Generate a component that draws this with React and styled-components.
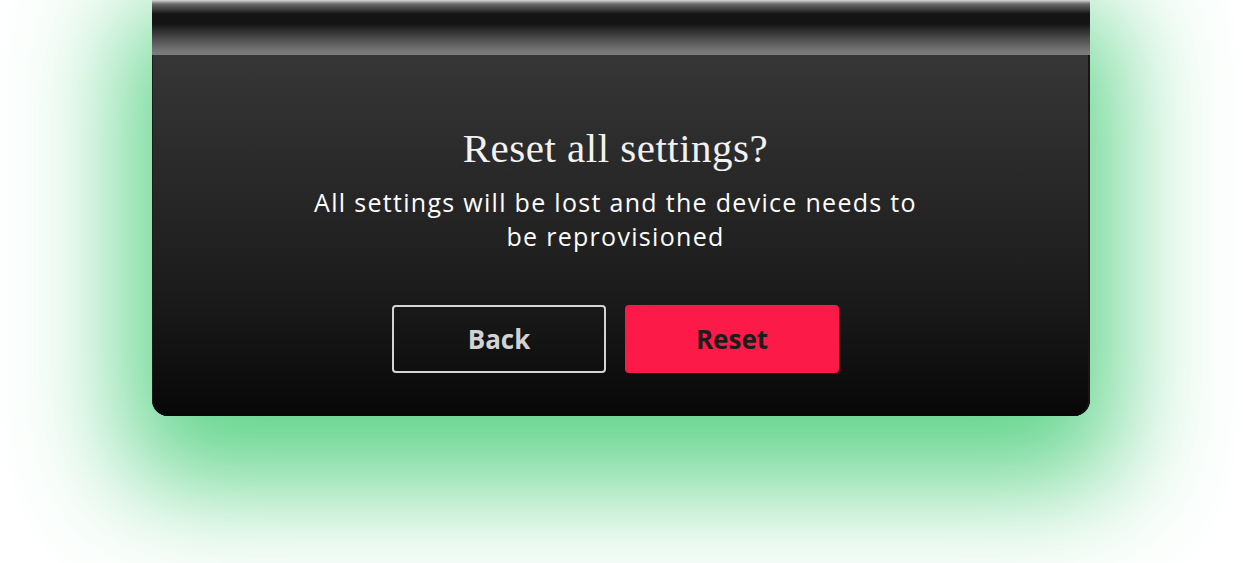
import React from "react";
import styled, { createGlobalStyle } from "styled-components";

const Global = createGlobalStyle`
  html, body { margin: 0; padding: 0; background: #ffffff; overflow: hidden; }
  * { box-sizing: border-box; }
`;

const Page = styled.div`
  width: 1243px;
  height: 563px;
  display: flex;
  justify-content: center;
  overflow: hidden;
`;

const Device = styled.div`
  width: 938px;
  height: 416px;
  margin-left: -1px;
  display: flex;
  flex-direction: column;
  border-radius: 0 0 16px 16px;
  background: #080808;
  box-shadow: 0 40px 110px 30px rgba(70, 205, 120, 0.85);
`;

const Bezel = styled.div`
  height: 55px;
  flex-shrink: 0;
  background: linear-gradient(
    to bottom,
    #d8d8d8 0px,
    #6a6a6a 4px,
    #141414 14px,
    #151515 24px,
    #4a4a4a 38px,
    #7a7a7a 52px,
    #7c7c7c 55px
  );
`;

const Panel = styled.div`
  flex: 1;
  border-radius: 0 0 16px 16px;
  border-left: 1px solid #1c1c1c;
  border-right: 2px solid #161616;
  background: linear-gradient(to bottom, #363636 0%, #2e2e2e 20%, #1c1c1c 65%, #070707 100%);
  display: flex;
  flex-direction: column;
  align-items: center;
  padding: 69px 10px 0 0;
`;

const Title = styled.h1`
  margin: 0;
  font-family: "Liberation Serif", "Times New Roman", serif;
  font-weight: normal;
  font-size: 41px;
  line-height: 48px;
  letter-spacing: 0.5px;
  color: #f2f2f2;
`;

const Message = styled.p`
  margin: 13px 0 0;
  max-width: 618px;
  text-align: center;
  font-family: "Open Sans", "Noto Sans", sans-serif;
  font-size: 25px;
  line-height: 34px;
  letter-spacing: 1.3px;
  color: #ffffff;
`;

const Actions = styled.div`
  margin-top: 52px;
  display: flex;
  gap: 19px;
`;

const Button = styled.button`
  width: 214px;
  height: 68px;
  border-radius: 4px;
  font-family: "Open Sans", "Noto Sans", sans-serif;
  font-weight: 700;
  font-size: 26px;
  cursor: pointer;
  border: 2px solid ${(p) => (p.$primary ? "#fb1a48" : "#d4d4d4")};
  background: ${(p) => (p.$primary ? "#fb1a48" : "transparent")};
  color: ${(p) => (p.$primary ? "#1c1c1c" : "#d2d2d2")};
`;

export default function App() {
  return (
    <>
      <Global />
      <Page>
        <Device>
          <Bezel />
          <Panel>
            <Title>Reset all settings?</Title>
            <Message>
              All settings will be lost and the device needs to be reprovisioned
            </Message>
            <Actions>
              <Button>Back</Button>
              <Button $primary>Reset</Button>
            </Actions>
          </Panel>
        </Device>
      </Page>
    </>
  );
}
